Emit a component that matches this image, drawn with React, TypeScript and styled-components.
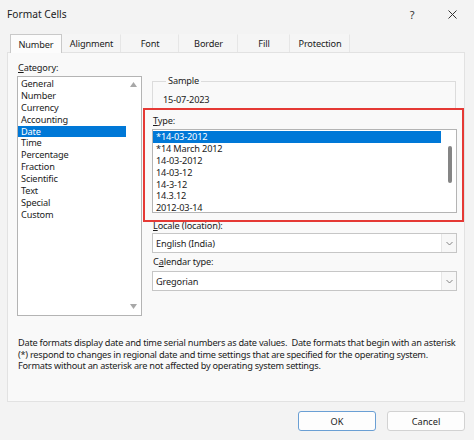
import React from 'react';
import styled, { createGlobalStyle } from 'styled-components';

const categories = [
    'General', 'Number', 'Currency', 'Accounting', 'Date', 'Time',
    'Percentage', 'Fraction', 'Scientific', 'Text', 'Special', 'Custom',
];

const types = [
    '*14-03-2012', '*14 March 2012', '14-03-2012', '14-03-12', '14-3-12', '14.3.12', '2012-03-14',
];

const tabs = [
    { label: 'Number', width: 52 },
    { label: 'Alignment', width: 59 },
    { label: 'Font', width: 58 },
    { label: 'Border', width: 59 },
    { label: 'Fill', width: 52 },
    { label: 'Protection', width: 60 },
];

const chevron = (
    <svg width="7" height="5" viewBox="0 0 7 5">
        <path d="M0.5 1 L3.5 4 L6.5 1" stroke="#777" strokeWidth="0.9" fill="none" />
    </svg>
);

const App: React.FC = () => {
    return (
        <>
            <GlobalStyle />
            <Dialog>
                <TitleBar>
                    <Title>Format Cells</Title>
                    <TitleButtons>
                        <TitleButton>?</TitleButton>
                        <TitleButton>
                            <svg width="9" height="9" viewBox="0 0 9 9">
                                <path d="M0.5 0.5 L8.5 8.5 M8.5 0.5 L0.5 8.5" stroke="#333" strokeWidth="1" fill="none" />
                            </svg>
                        </TitleButton>
                    </TitleButtons>
                </TitleBar>

                <TabStrip>
                    {tabs.map((t, i) => (
                        <Tab key={t.label} $active={i === 0} $width={t.width}>{t.label}</Tab>
                    ))}
                </TabStrip>

                <Panel>
                    <Columns>
                        <LeftCol>
                            <Label><u>C</u>ategory:</Label>
                            <CategoryList>
                                <Items>
                                    {categories.map((c) => (
                                        <Item key={c} $selected={c === 'Date'}>{c}</Item>
                                    ))}
                                </Items>
                                <ArrowTrack>
                                    <Arrow viewBox="0 0 7 5"><path d="M0 5 L3.5 0 L7 5 Z" /></Arrow>
                                    <Arrow viewBox="0 0 7 5"><path d="M0 0 L3.5 5 L7 0 Z" /></Arrow>
                                </ArrowTrack>
                            </CategoryList>
                        </LeftCol>

                        <RightCol>
                            <SampleBox>
                                <SampleLegend>Sample</SampleLegend>
                                <SampleValue>15-07-2023</SampleValue>
                            </SampleBox>

                            <Label $top={5}><u>T</u>ype:</Label>
                            <TypeList>
                                <Items>
                                    {types.map((t, i) => (
                                        <Item key={t} $selected={i === 0}>{t}</Item>
                                    ))}
                                </Items>
                                <ThumbTrack>
                                    <Thumb />
                                </ThumbTrack>
                            </TypeList>

                            <Label $top={7}><u>L</u>ocale (location):</Label>
                            <Select $top={1}>
                                <SelectText>English (India)</SelectText>
                                <Chevron>{chevron}</Chevron>
                            </Select>

                            <Label $top={3}>C<u>a</u>lendar type:</Label>
                            <Select $top={3}>
                                <SelectText>Gregorian</SelectText>
                                <Chevron>{chevron}</Chevron>
                            </Select>
                        </RightCol>
                    </Columns>

                    <Description>
                        <Line>Date formats display date and time serial numbers as date values.&nbsp; Date formats that begin with an asterisk</Line>
                        <Line>(*) respond to changes in regional date and time settings that are specified for the operating system.</Line>
                        <Line>Formats without an asterisk are not affected by operating system settings.</Line>
                    </Description>

                    <Highlight />
                </Panel>

                <ButtonRow>
                    <Button $default>OK</Button>
                    <Button>Cancel</Button>
                </ButtonRow>
            </Dialog>
        </>
    );
}

export default App;

const GlobalStyle = createGlobalStyle`
    html, body {
        margin: 0;
        padding: 0;
        background: #f3f3f3;
    }
    * {
        box-sizing: border-box;
    }
`;

const Dialog = styled.div`
    width: 474px;
    height: 440px;
    background: #f3f3f3;
    font-family: "Noto Sans", "Open Sans", sans-serif;
    font-size: 9.2px;
    letter-spacing: -0.15px;
    color: #1b1b1b;
    display: flex;
    flex-direction: column;
    overflow: hidden;
    user-select: none;
`;

const TitleBar = styled.div`
    height: 28px;
    display: flex;
    align-items: center;
    justify-content: space-between;
    padding: 0 12px 0 7px;
`;

const Title = styled.span`
    font-size: 10.2px;
    letter-spacing: 0;
`;

const TitleButtons = styled.div`
    display: flex;
    align-items: center;
    gap: 20px;
`;

const TitleButton = styled.div`
    width: 20px;
    height: 20px;
    display: flex;
    align-items: center;
    justify-content: center;
    font-size: 11px;
    color: #333;
`;

const TabStrip = styled.div`
    display: flex;
    height: 18px;
    margin: 6px 0 0 10px;
`;

const Tab = styled.div<{ $active?: boolean; $width: number }>`
    width: ${(p) => p.$width}px;
    display: flex;
    align-items: center;
    justify-content: center;
    background: ${(p) => (p.$active ? '#fcfcfc' : '#f5f5f5')};
    border: 1px solid ${(p) => (p.$active ? '#c9c9c9' : 'transparent')};
    border-bottom: none;
    border-right: 1px solid ${(p) => (p.$active ? '#c9c9c9' : '#e6e6e6')};
    margin-bottom: ${(p) => (p.$active ? '-1px' : '0')};
    position: relative;
    z-index: ${(p) => (p.$active ? 1 : 0)};
`;

const Panel = styled.div`
    position: relative;
    margin-left: 7px;
    width: 458px;
    height: 350px;
    background: #f9f9f9;
    border: 1px solid #e2e2e2;
    padding: 9px 7px 0 9px;
`;

const Columns = styled.div`
    display: grid;
    grid-template-columns: 125px 305px;
    column-gap: 10px;
    align-items: start;
`;

const LeftCol = styled.div`
    display: flex;
    flex-direction: column;
`;

const RightCol = styled.div`
    display: flex;
    flex-direction: column;
`;

const Label = styled.div<{ $top?: number }>`
    line-height: 12px;
    margin-top: ${(p) => p.$top ?? 0}px;
    padding-left: 1px;
`;

const CategoryList = styled.div`
    height: 240px;
    margin-top: 2px;
    background: #ffffff;
    border: 1px solid #b4b4b4;
    display: flex;
`;

const Items = styled.div`
    flex: 1;
    padding-top: 1px;
    display: flex;
    flex-direction: column;
`;

const Item = styled.div<{ $selected?: boolean }>`
    height: 11.9px;
    line-height: 11.9px;
    padding-left: 3px;
    white-space: nowrap;
    background: ${(p) => (p.$selected ? '#0078d7' : 'transparent')};
    color: ${(p) => (p.$selected ? '#ffffff' : '#1b1b1b')};
`;

const ArrowTrack = styled.div`
    width: 15px;
    display: flex;
    flex-direction: column;
    justify-content: space-between;
    align-items: center;
    padding: 5px 0 6px;
`;

const Arrow = styled.svg`
    width: 7px;
    height: 5px;
    fill: #a8a8a8;
`;

const SampleBox = styled.fieldset`
    margin: 13px 0 0;
    padding: 7px 6px 3px 10px;
    border: 1px solid #dcdcdc;
    min-width: 0;
    width: 304px;
`;

const SampleLegend = styled.legend`
    padding: 0 2px;
    margin-left: 3px;
    line-height: 12px;
`;

const SampleValue = styled.div`
    line-height: 12px;
`;

const TypeList = styled.div`
    height: 84px;
    margin-top: 2px;
    background: #ffffff;
    border: 1px solid #b4b4b4;
    display: flex;
`;

const ThumbTrack = styled.div`
    width: 15px;
    display: flex;
    justify-content: center;
    padding: 16px 0 0 3px;
`;

const Thumb = styled.div`
    width: 4px;
    height: 37px;
    border-radius: 2px;
    background: #858585;
`;

const Select = styled.div<{ $top?: number }>`
    height: 20px;
    margin-top: ${(p) => p.$top ?? 0}px;
    background: #ffffff;
    border: 1px solid #c6c6c6;
    display: flex;
    align-items: center;
`;

const SelectText = styled.span`
    flex: 1;
    padding-left: 3px;
`;

const Chevron = styled.div`
    width: 15px;
    height: 100%;
    border-left: 1px solid #e6e6e6;
    background: #f7f7f7;
    display: flex;
    align-items: center;
    justify-content: center;
`;

const Description = styled.div`
    margin-top: 21px;
    padding-left: 1px;
    display: flex;
    flex-direction: column;
    letter-spacing: -0.24px;
`;

const Line = styled.span`
    line-height: 11.6px;
    white-space: nowrap;
`;

const Highlight = styled.div`
    position: absolute;
    left: 135px;
    top: 55px;
    width: 321px;
    height: 114px;
    border: 2px solid #e53935;
    pointer-events: none;
`;

const ButtonRow = styled.div`
    display: flex;
    justify-content: flex-end;
    gap: 11px;
    padding: 9px 9px 0 0;
`;

const Button = styled.button<{ $default?: boolean }>`
    width: 78px;
    height: 20px;
    font-family: "Noto Sans", "Open Sans", sans-serif;
    font-size: 9.2px;
    color: #1b1b1b;
    background: #fdfdfd;
    border: 1px solid ${(p) => (p.$default ? '#6a9fd4' : '#d2d2d2')};
    border-radius: 3px;
    padding: 0;
`;
